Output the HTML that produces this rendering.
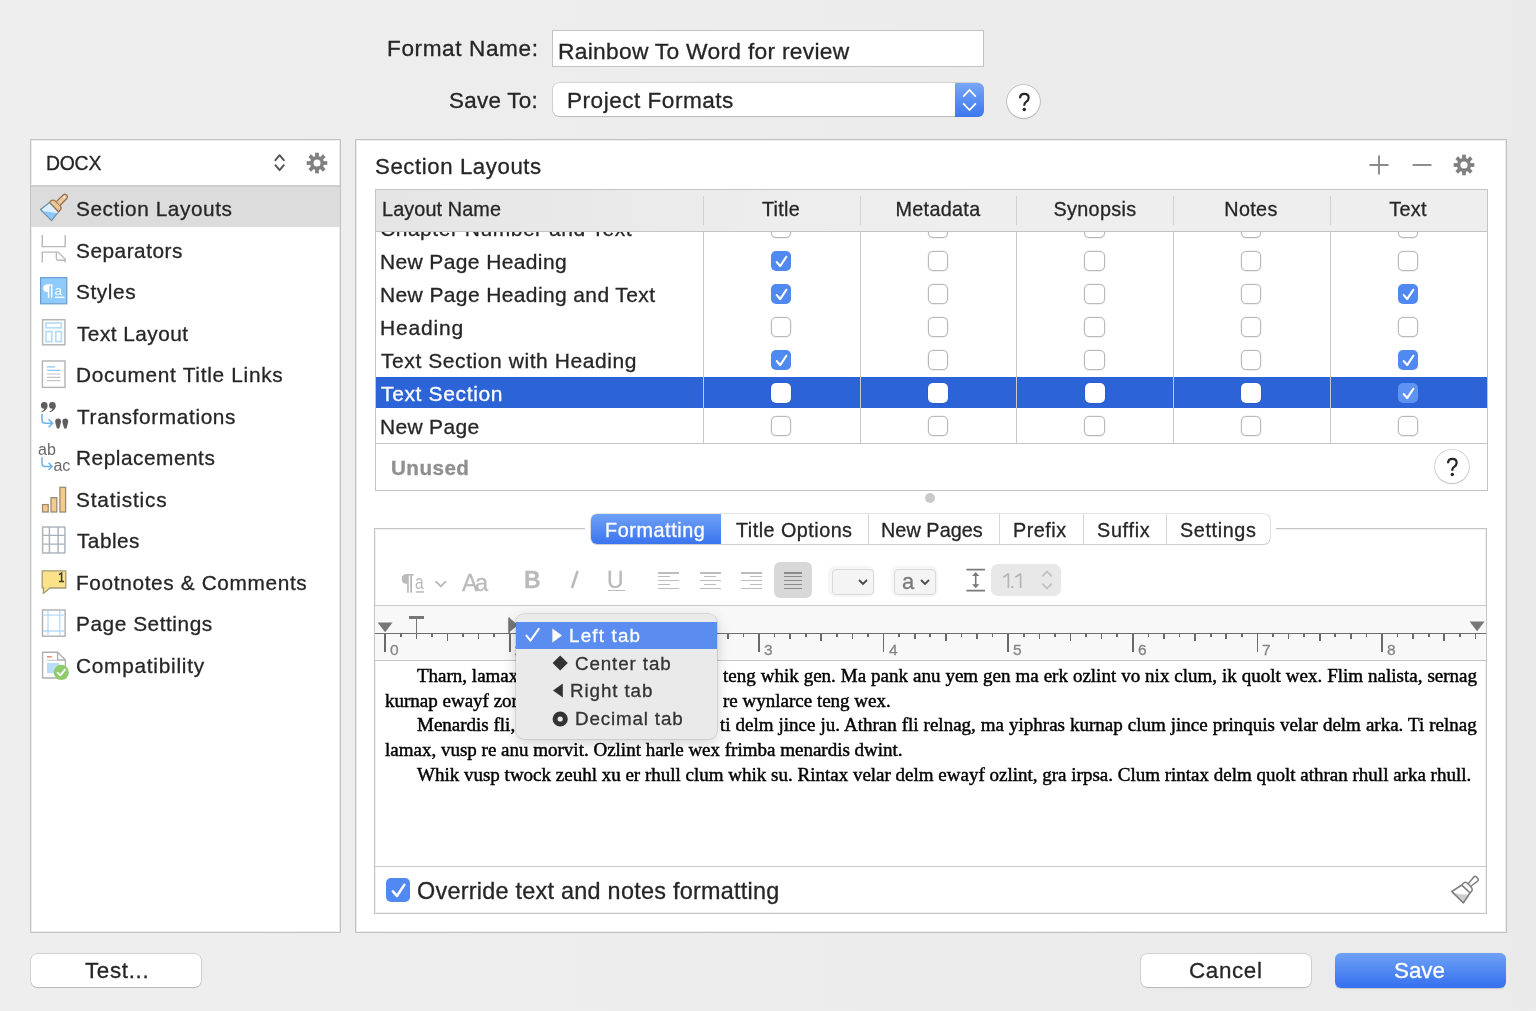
<!DOCTYPE html><html><head><meta charset="utf-8"><style>
*{margin:0;padding:0;box-sizing:content-box}
html,body{width:1536px;height:1011px;overflow:hidden}
body{background:linear-gradient(to right,#eeeeee,#ededed 40%,#eaeaea);font-family:"Liberation Sans",sans-serif;color:#262626;position:relative}
.abs{position:absolute}
.t{position:absolute;white-space:nowrap;line-height:normal;will-change:transform;-webkit-text-stroke:0.3px currentColor}
.panel{position:absolute;background:#fff;border:1px solid #c2c2c2;box-shadow:inset 0 0 0 1px rgba(0,0,0,0.07)}
.cb{position:absolute;border:1px solid #b9b9b9;border-radius:5px;background:#fff;box-shadow:0 0 0 0.5px rgba(0,0,0,0.09),0 0.5px 0.5px rgba(0,0,0,0.05)}
.cb.on{border:none;box-shadow:none}
.cb svg{position:absolute;left:0;top:0}
svg{will-change:transform}
.btn{position:absolute;background:#fff;border-radius:6px;box-shadow:0 0 0 0.5px rgba(0,0,0,0.22),0 1px 1px rgba(0,0,0,0.12)}
</style></head><body>
<div class="t" style="left:387.10px;top:36.41px;font-size:22.6px;letter-spacing:0.600px;">Format Name:</div>
<div class="abs" style="left:552px;top:30px;width:430px;height:35px;background:#fff;border:1px solid #c3c3c3"></div>
<div class="t" style="left:558.10px;top:38.22px;font-size:22.8px;letter-spacing:0.280px;">Rainbow To Word for review</div>
<div class="t" style="left:449.30px;top:88.49px;font-size:22.4px;letter-spacing:0.286px;">Save To:</div>
<div class="btn" style="left:553px;top:83px;width:430px;height:33px"></div>
<div class="t" style="left:567.00px;top:88.31px;font-size:22.6px;letter-spacing:0.493px;">Project Formats</div>
<div class="abs" style="left:955px;top:82.5px;width:28.5px;height:34px;border-radius:0 6px 6px 0;background:linear-gradient(#77a7f5,#3d76ef)"><svg width="29" height="34" viewBox="0 0 29 34"><path d="M8.2 13.6 L14.5 7 L20.8 13.6 M8.2 20.4 L14.5 27 L20.8 20.4" fill="none" stroke="#fff" stroke-width="1.8"/></svg></div>
<div class="abs" style="left:1006.8px;top:84.6px;width:33.6px;height:33.6px;border-radius:50%;background:#fff;box-shadow:0 0 0 0.8px rgba(0,0,0,0.2),0 1px 1.5px rgba(0,0,0,0.12)"></div><svg class="abs" style="left:1006.8px;top:84.6px" width="33.6" height="33.6" viewBox="0 0 34 34"><path d="M13.1 13.4 Q13.4 9 17.6 9 Q21.9 9 21.9 12.9 Q21.9 15.4 19.4 17 Q17.5 18.3 17.5 20.3 V21" fill="none" stroke="#262626" stroke-width="2.2" stroke-linecap="butt"/><circle cx="17.5" cy="24.9" r="1.75" fill="#262626"/></svg>
<div class="panel" style="left:30px;top:139px;width:309px;height:792px"></div>
<div class="t" style="left:46.10px;top:152.05px;font-size:19.4px;letter-spacing:-0.233px;">DOCX</div>
<svg class="abs" style="left:272px;top:152px" width="16" height="22" viewBox="0 0 16 22"><path d="M3.4 8.2 L7.6 3.2 L11.8 8.2 M3.4 13.2 L7.6 18.2 L11.8 13.2" fill="none" stroke="#555" stroke-width="1.9" stroke-linecap="round" stroke-linejoin="round"/></svg>
<svg class="abs" style="left:305px;top:150.5px" width="24" height="24" viewBox="-12 -12 24 24"><circle r="7.0" fill="#808080"/><rect x="-1.9" y="-10.3" width="3.8" height="4.800000000000001" fill="#808080" transform="rotate(0.0)"/><rect x="-1.9" y="-10.3" width="3.8" height="4.800000000000001" fill="#808080" transform="rotate(45.0)"/><rect x="-1.9" y="-10.3" width="3.8" height="4.800000000000001" fill="#808080" transform="rotate(90.0)"/><rect x="-1.9" y="-10.3" width="3.8" height="4.800000000000001" fill="#808080" transform="rotate(135.0)"/><rect x="-1.9" y="-10.3" width="3.8" height="4.800000000000001" fill="#808080" transform="rotate(180.0)"/><rect x="-1.9" y="-10.3" width="3.8" height="4.800000000000001" fill="#808080" transform="rotate(225.0)"/><rect x="-1.9" y="-10.3" width="3.8" height="4.800000000000001" fill="#808080" transform="rotate(270.0)"/><rect x="-1.9" y="-10.3" width="3.8" height="4.800000000000001" fill="#808080" transform="rotate(315.0)"/><circle r="3.5" fill="#fff"/></svg>
<div class="abs" style="left:31px;top:185px;width:309px;height:2px;background:#cdcdcd"></div>
<div class="abs" style="left:31px;top:187px;width:309px;height:39.6px;background:#dcdcdc"></div>
<div class="t" style="left:76.30px;top:197.06px;font-size:20.8px;letter-spacing:0.564px;">Section Layouts</div>
<div class="t" style="left:76.30px;top:238.56px;font-size:20.8px;letter-spacing:0.522px;">Separators</div>
<div class="t" style="left:76.30px;top:280.06px;font-size:20.8px;letter-spacing:0.580px;">Styles</div>
<div class="t" style="left:76.80px;top:321.56px;font-size:20.8px;letter-spacing:0.470px;">Text Layout</div>
<div class="t" style="left:75.60px;top:363.06px;font-size:20.8px;letter-spacing:0.721px;">Document Title Links</div>
<div class="t" style="left:76.80px;top:404.56px;font-size:20.8px;letter-spacing:0.643px;">Transformations</div>
<div class="t" style="left:75.60px;top:446.06px;font-size:20.8px;letter-spacing:0.536px;">Replacements</div>
<div class="t" style="left:76.30px;top:487.56px;font-size:20.8px;letter-spacing:0.822px;">Statistics</div>
<div class="t" style="left:76.80px;top:529.06px;font-size:20.8px;letter-spacing:0.460px;">Tables</div>
<div class="t" style="left:75.60px;top:570.56px;font-size:20.8px;letter-spacing:0.647px;">Footnotes &amp; Comments</div>
<div class="t" style="left:75.60px;top:612.06px;font-size:20.8px;letter-spacing:0.558px;">Page Settings</div>
<div class="t" style="left:76.20px;top:653.56px;font-size:20.8px;letter-spacing:0.758px;">Compatibility</div>
<svg class="abs" style="left:34px;top:188px" width="40" height="40" viewBox="0 0 40 40">
<path d="M15.6 14.4 L6.5 21.6 L17.6 32.6 L24.5 23.7 Z" fill="#8ec8f8" stroke="#6f90ad" stroke-width="1.3" stroke-linejoin="round"/>
<path d="M15.4 15.4 L7.9 21.6 L9.6 23.3 Q16 23.6 23.3 25.2 L23.6 23.4 Z" fill="#def0fd"/>
<path d="M15.6 14.4 L16.8 12.8 Q19.2 11.2 21.6 13.2 L26.2 17.6 Q28 20 26.2 22 L24.5 23.7 Z" fill="#ecc79a" stroke="#9c7752" stroke-width="1.3" stroke-linejoin="round"/>
<path d="M22.6 13.4 L29.4 6.7 Q30.9 5.6 32.3 6.9 L32.9 7.5 Q34.1 9 32.8 10.5 L26.2 17.2" fill="#ecc79a" stroke="#93704d" stroke-width="1.3" stroke-linejoin="round"/>
<circle cx="30.3" cy="9.2" r="0.9" fill="#fff"/></svg>
<svg class="abs" style="left:40px;top:234px" width="28" height="30" viewBox="0 0 28 30">
<path d="M2.3 1 V12.6 H25.2 V1" fill="none" stroke="#b8b8b8" stroke-width="1.4"/>
<path d="M2.3 28.5 V18.1 H18.2 L25.2 25.2 V28.5 M16.4 18.1 V24.6 Q16.4 26.3 18.2 26.3 H25.2" fill="none" stroke="#b8b8b8" stroke-width="1.4"/></svg>
<svg class="abs" style="left:40px;top:277px" width="28" height="28" viewBox="0 0 28 28">
<rect x="0.6" y="0.6" width="26.2" height="26.2" fill="#8ecbfb" stroke="#6e9ccc" stroke-width="1.2"/>
<path d="M9.4 7.6 H7.2 Q3.3 7.6 3.3 11.3 Q3.3 15 7.2 15 H8.4 Z" fill="#fff"/>
<rect x="7.8" y="7.6" width="1.5" height="13.2" fill="#fff"/><rect x="10.9" y="7.6" width="1.5" height="13.2" fill="#fff"/><rect x="7.2" y="7.6" width="5.2" height="1.4" fill="#fff"/>
<text x="14.6" y="17.8" font-family="Liberation Sans" font-size="13.5" fill="#fff">a</text>
<rect x="15" y="19.6" width="9.4" height="1.4" fill="#fff"/></svg>
<svg class="abs" style="left:40px;top:317px" width="28" height="30" viewBox="0 0 28 30">
<rect x="2.6" y="2.7" width="22.3" height="25.1" fill="#fff" stroke="#b5b5b5" stroke-width="1.5"/>
<g fill="none" stroke="#b7dcf7" stroke-width="1.7"><rect x="5.95" y="6.05" width="15.4" height="4.7"/><rect x="5.95" y="14.55" width="5.9" height="10.1"/><rect x="15.75" y="14.55" width="5.6" height="10.1"/></g></svg>
<svg class="abs" style="left:40px;top:359px" width="28" height="30" viewBox="0 0 28 30">
<rect x="2.4" y="2" width="22.6" height="26.4" fill="#fff" stroke="#b2b2b2" stroke-width="1.4"/>
<path d="M7 7.9 H15 M7 11.4 H20.5" stroke="#8cc6f5" stroke-width="1.2"/>
<path d="M7 15 H20.5 M7 18.3 H20.5 M7 21.7 H20.5" stroke="#c4c4c4" stroke-width="1.2"/></svg>
<svg class="abs" style="left:36px;top:398px" width="36" height="34" viewBox="0 0 36 34">
<g fill="#5f5f5f"><circle cx="8.2" cy="7.4" r="3.3"/><path d="M11.4 8 Q11.4 12.6 5.6 14.2 L5.3 13.4 Q8.6 11.8 8.9 9.4 Z"/>
<circle cx="16.4" cy="7.4" r="3.3"/><path d="M19.6 8 Q19.6 12.6 13.8 14.2 L13.5 13.4 Q16.8 11.8 17.1 9.4 Z"/>
<path d="M19.2 23.6 Q19.2 20.6 22.1 20.6 Q25 20.6 25 23.6 Q25 25 23.2 30.6 H21 Q19.2 25 19.2 23.6 Z"/>
<path d="M26.4 23.6 Q26.4 20.6 29.3 20.6 Q32.2 20.6 32.2 23.6 Q32.2 25 30.4 30.6 H28.2 Q26.4 25 26.4 23.6 Z"/></g>
<path d="M6 16 V21.8 Q6 25.2 9.4 25.2 H16.4 M12.6 21.2 L16.6 25.2 L12.6 29.2" fill="none" stroke="#6cb4ec" stroke-width="1.6"/></svg>
<svg class="abs" style="left:36px;top:440px" width="36" height="36" viewBox="0 0 36 36">
<text x="2" y="15.4" font-family="Liberation Sans" font-size="16" fill="#6a6a6a">ab</text>
<text x="17.4" y="30.8" font-family="Liberation Sans" font-size="16" fill="#6a6a6a">ac</text>
<path d="M6 17.2 V23.8 Q6 26.4 8.8 26.4 H15.8 M12.6 22.8 L16 26.4 L12.6 30" fill="none" stroke="#6cb4ec" stroke-width="1.5"/></svg>
<svg class="abs" style="left:40px;top:484px" width="28" height="30" viewBox="0 0 28 30">
<g fill="#f7c98a" stroke="#9b8b76" stroke-width="1.3"><rect x="2.5" y="20.6" width="5.7" height="7.4"/><rect x="11" y="13.7" width="5.8" height="14.3"/><rect x="19.9" y="3.3" width="5.7" height="24.7"/></g></svg>
<svg class="abs" style="left:40px;top:524px" width="28" height="32" viewBox="0 0 28 32">
<g fill="none" stroke="#a7b1ba" stroke-width="1.4"><rect x="2.6" y="3" width="22.3" height="26"/><path d="M9.4 3 V29 M18.1 3 V29 M2.6 11.4 H24.9 M2.6 20.1 H24.9"/></g></svg>
<svg class="abs" style="left:38px;top:567px" width="32" height="32" viewBox="0 0 32 32">
<path d="M4.2 3.8 H27.8 V21 H11.8 L5.3 26.4 L5.6 21 H4.2 Z" fill="#fbe28a" stroke="#a39c78" stroke-width="1.3" stroke-linejoin="round"/>
<path d="M21 7.6 L23.6 6 V14.6 M21 14.6 H26" fill="none" stroke="#3d3a2c" stroke-width="1.5"/></svg>
<svg class="abs" style="left:40px;top:607px" width="28" height="32" viewBox="0 0 28 32">
<rect x="2.5" y="3" width="22.6" height="26.2" fill="#fff" stroke="#aeaeae" stroke-width="1.4"/>
<path d="M8 3.6 V28.6 M19.8 3.6 V28.6 M3.2 8.2 H24.4 M3.2 24 H24.4" stroke="#b5dbf8" stroke-width="1.3"/></svg>
<svg class="abs" style="left:38px;top:648px" width="34" height="34" viewBox="0 0 34 34">
<path d="M4.6 30 V4.2 H19.6 L27.4 12 V30 Z" fill="#fff" stroke="#b0b0b0" stroke-width="1.4" stroke-linejoin="round"/>
<path d="M19.6 4.2 V12 H27.4" fill="none" stroke="#b0b0b0" stroke-width="1.4"/>
<path d="M9 8.8 H13.8" stroke="#e08b78" stroke-width="1.5"/><path d="M9 12.3 H19.6" stroke="#cfcfcf" stroke-width="1.2"/>
<rect x="9" y="15" width="12.4" height="10.2" fill="#b9dcf9"/>
<circle cx="23.3" cy="24.4" r="7.6" fill="#8fcb69"/>
<path d="M19.6 24.6 L22.3 27.4 L27 21.6" fill="none" stroke="#fff" stroke-width="1.8" stroke-linecap="round" stroke-linejoin="round"/></svg>
<div class="panel" style="left:355px;top:139px;width:1150px;height:792px"></div>
<div class="t" style="left:374.50px;top:154.38px;font-size:22.2px;letter-spacing:0.593px;">Section Layouts</div>
<svg class="abs" style="left:1366.5px;top:152.5px" width="24" height="24"><path d="M12 2.5 V21.5 M2.5 12 H21.5" stroke="#8a8a8a" stroke-width="1.9"/></svg>
<svg class="abs" style="left:1409.5px;top:152.5px" width="24" height="24"><path d="M2.5 12 H21.5" stroke="#8a8a8a" stroke-width="1.9"/></svg>
<svg class="abs" style="left:1451.6px;top:152.8px" width="24" height="24" viewBox="-12 -12 24 24"><circle r="7.0" fill="#808080"/><rect x="-1.9" y="-10.3" width="3.8" height="4.800000000000001" fill="#808080" transform="rotate(0.0)"/><rect x="-1.9" y="-10.3" width="3.8" height="4.800000000000001" fill="#808080" transform="rotate(45.0)"/><rect x="-1.9" y="-10.3" width="3.8" height="4.800000000000001" fill="#808080" transform="rotate(90.0)"/><rect x="-1.9" y="-10.3" width="3.8" height="4.800000000000001" fill="#808080" transform="rotate(135.0)"/><rect x="-1.9" y="-10.3" width="3.8" height="4.800000000000001" fill="#808080" transform="rotate(180.0)"/><rect x="-1.9" y="-10.3" width="3.8" height="4.800000000000001" fill="#808080" transform="rotate(225.0)"/><rect x="-1.9" y="-10.3" width="3.8" height="4.800000000000001" fill="#808080" transform="rotate(270.0)"/><rect x="-1.9" y="-10.3" width="3.8" height="4.800000000000001" fill="#808080" transform="rotate(315.0)"/><circle r="3.6" fill="#fff"/></svg>
<div class="abs" style="left:375px;top:189px;width:1111px;height:300px;border:1px solid #c4c4c4;background:#fff;overflow:hidden">
<div class="t" style="left:4.30px;top:26.68px;font-size:21px;letter-spacing:0.527px;color:#262626">Chapter Number and Text</div>
<div class="cb" style="left:394.8px;top:27.8px;width:18.4px;height:18.4px"></div>
<div class="cb" style="left:551.8px;top:27.8px;width:18.4px;height:18.4px"></div>
<div class="cb" style="left:708.3px;top:27.8px;width:18.4px;height:18.4px"></div>
<div class="cb" style="left:864.8px;top:27.8px;width:18.4px;height:18.4px"></div>
<div class="cb" style="left:1021.8px;top:27.8px;width:18.4px;height:18.4px"></div>
<div class="t" style="left:3.70px;top:59.68px;font-size:21px;letter-spacing:0.380px;color:#262626">New Page Heading</div>
<div class="cb on" style="left:394.7px;top:60.7px;width:20.6px;height:20.6px;background:#5089f1"><svg width="20.6" height="20.6" viewBox="0 0 20 20"><path d="M5.6 10.8 L8.9 14.6 L14.9 5.6" fill="none" stroke="#fff" stroke-width="2.1" stroke-linecap="round" stroke-linejoin="round"/></svg></div>
<div class="cb" style="left:551.8px;top:60.8px;width:18.4px;height:18.4px"></div>
<div class="cb" style="left:708.3px;top:60.8px;width:18.4px;height:18.4px"></div>
<div class="cb" style="left:864.8px;top:60.8px;width:18.4px;height:18.4px"></div>
<div class="cb" style="left:1021.8px;top:60.8px;width:18.4px;height:18.4px"></div>
<div class="t" style="left:3.70px;top:92.68px;font-size:21px;letter-spacing:0.383px;color:#262626">New Page Heading and Text</div>
<div class="cb on" style="left:394.7px;top:93.7px;width:20.6px;height:20.6px;background:#5089f1"><svg width="20.6" height="20.6" viewBox="0 0 20 20"><path d="M5.6 10.8 L8.9 14.6 L14.9 5.6" fill="none" stroke="#fff" stroke-width="2.1" stroke-linecap="round" stroke-linejoin="round"/></svg></div>
<div class="cb" style="left:551.8px;top:93.8px;width:18.4px;height:18.4px"></div>
<div class="cb" style="left:708.3px;top:93.8px;width:18.4px;height:18.4px"></div>
<div class="cb" style="left:864.8px;top:93.8px;width:18.4px;height:18.4px"></div>
<div class="cb on" style="left:1021.7px;top:93.7px;width:20.6px;height:20.6px;background:#5089f1"><svg width="20.6" height="20.6" viewBox="0 0 20 20"><path d="M5.6 10.8 L8.9 14.6 L14.9 5.6" fill="none" stroke="#fff" stroke-width="2.1" stroke-linecap="round" stroke-linejoin="round"/></svg></div>
<div class="t" style="left:3.70px;top:125.68px;font-size:21px;letter-spacing:0.833px;color:#262626">Heading</div>
<div class="cb" style="left:394.8px;top:126.8px;width:18.4px;height:18.4px"></div>
<div class="cb" style="left:551.8px;top:126.8px;width:18.4px;height:18.4px"></div>
<div class="cb" style="left:708.3px;top:126.8px;width:18.4px;height:18.4px"></div>
<div class="cb" style="left:864.8px;top:126.8px;width:18.4px;height:18.4px"></div>
<div class="cb" style="left:1021.8px;top:126.8px;width:18.4px;height:18.4px"></div>
<div class="t" style="left:4.90px;top:158.68px;font-size:21px;letter-spacing:0.575px;color:#262626">Text Section with Heading</div>
<div class="cb on" style="left:394.7px;top:159.7px;width:20.6px;height:20.6px;background:#5089f1"><svg width="20.6" height="20.6" viewBox="0 0 20 20"><path d="M5.6 10.8 L8.9 14.6 L14.9 5.6" fill="none" stroke="#fff" stroke-width="2.1" stroke-linecap="round" stroke-linejoin="round"/></svg></div>
<div class="cb" style="left:551.8px;top:159.8px;width:18.4px;height:18.4px"></div>
<div class="cb" style="left:708.3px;top:159.8px;width:18.4px;height:18.4px"></div>
<div class="cb" style="left:864.8px;top:159.8px;width:18.4px;height:18.4px"></div>
<div class="cb on" style="left:1021.7px;top:159.7px;width:20.6px;height:20.6px;background:#5089f1"><svg width="20.6" height="20.6" viewBox="0 0 20 20"><path d="M5.6 10.8 L8.9 14.6 L14.9 5.6" fill="none" stroke="#fff" stroke-width="2.1" stroke-linecap="round" stroke-linejoin="round"/></svg></div>
<div class="abs" style="left:0;top:187px;width:1111px;height:31px;background:#2c63d6"></div>
<div class="t" style="left:4.90px;top:191.68px;font-size:21px;letter-spacing:0.645px;color:#fff">Text Section</div>
<div class="cb" style="left:395px;top:193px;width:20px;height:20px;border:none;border-radius:5px;background:#fff"></div>
<div class="cb" style="left:552px;top:193px;width:20px;height:20px;border:none;border-radius:5px;background:#fff"></div>
<div class="cb" style="left:708.5px;top:193px;width:20px;height:20px;border:none;border-radius:5px;background:#fff"></div>
<div class="cb" style="left:865px;top:193px;width:20px;height:20px;border:none;border-radius:5px;background:#fff"></div>
<div class="cb on" style="left:1021.7px;top:192.7px;width:20.6px;height:20.6px;background:#5e93f2"><svg width="20.6" height="20.6" viewBox="0 0 20 20"><path d="M5.6 10.8 L8.9 14.6 L14.9 5.6" fill="none" stroke="#fff" stroke-width="2.1" stroke-linecap="round" stroke-linejoin="round"/></svg></div>
<div class="t" style="left:3.70px;top:224.68px;font-size:21px;letter-spacing:0.314px;color:#262626">New Page</div>
<div class="cb" style="left:394.8px;top:225.8px;width:18.4px;height:18.4px"></div>
<div class="cb" style="left:551.8px;top:225.8px;width:18.4px;height:18.4px"></div>
<div class="cb" style="left:708.3px;top:225.8px;width:18.4px;height:18.4px"></div>
<div class="cb" style="left:864.8px;top:225.8px;width:18.4px;height:18.4px"></div>
<div class="cb" style="left:1021.8px;top:225.8px;width:18.4px;height:18.4px"></div>
<div class="abs" style="left:327px;top:41px;width:1px;height:212px;background:#c8c8c8"></div>
<div class="abs" style="left:484px;top:41px;width:1px;height:212px;background:#c8c8c8"></div>
<div class="abs" style="left:640px;top:41px;width:1px;height:212px;background:#c8c8c8"></div>
<div class="abs" style="left:797px;top:41px;width:1px;height:212px;background:#c8c8c8"></div>
<div class="abs" style="left:954px;top:41px;width:1px;height:212px;background:#c8c8c8"></div>
<div class="abs" style="left:0;top:253px;width:1111px;height:1px;background:#c4c4c4"></div>
<div class="abs" style="left:0;top:0;width:1111px;height:40.5px;background:linear-gradient(to right,#e5e5e5 0px,#e9e9e9 200px,#ededed 400px,#eeeeee 600px);border-bottom:1px solid #c4c4c4"></div>
<div class="abs" style="left:327px;top:6px;width:1px;height:29px;background:#d2d2d2"></div>
<div class="abs" style="left:484px;top:6px;width:1px;height:29px;background:#d2d2d2"></div>
<div class="abs" style="left:640px;top:6px;width:1px;height:29px;background:#d2d2d2"></div>
<div class="abs" style="left:797px;top:6px;width:1px;height:29px;background:#d2d2d2"></div>
<div class="abs" style="left:954px;top:6px;width:1px;height:29px;background:#d2d2d2"></div>
<div class="t" style="left:6.40px;top:8.48px;font-size:19.8px;letter-spacing:0.130px;">Layout Name</div>
<div class="t" style="left:305.00px;top:8.48px;font-size:19.8px;width:200px;text-align:center;letter-spacing:0.32px">Title</div>
<div class="t" style="left:462.00px;top:8.48px;font-size:19.8px;width:200px;text-align:center;letter-spacing:0.32px">Metadata</div>
<div class="t" style="left:618.50px;top:8.48px;font-size:19.8px;width:200px;text-align:center;letter-spacing:0.32px">Synopsis</div>
<div class="t" style="left:775.00px;top:8.48px;font-size:19.8px;width:200px;text-align:center;letter-spacing:0.32px">Notes</div>
<div class="t" style="left:932.00px;top:8.48px;font-size:19.8px;width:200px;text-align:center;letter-spacing:0.32px">Text</div>
<div class="t" style="left:15.40px;top:265.85px;font-size:20.6px;letter-spacing:0.480px;font-weight:bold;color:#8f8f8f">Unused</div>
<div class="abs" style="left:1059.3px;top:259.7px;width:33.6px;height:33.6px;border-radius:50%;background:#fff;box-shadow:0 0 0 0.8px rgba(0,0,0,0.2),0 1px 1.5px rgba(0,0,0,0.12)"></div><svg class="abs" style="left:1059.3px;top:259.7px" width="33.6" height="33.6" viewBox="0 0 34 34"><path d="M13.1 13.4 Q13.4 9 17.6 9 Q21.9 9 21.9 12.9 Q21.9 15.4 19.4 17 Q17.5 18.3 17.5 20.3 V21" fill="none" stroke="#262626" stroke-width="2.2" stroke-linecap="butt"/><circle cx="17.5" cy="24.9" r="1.75" fill="#262626"/></svg>
</div>
<div class="abs" style="left:925px;top:493px;width:10px;height:10px;border-radius:50%;background:#c9c9c9"></div>
<div class="abs" style="left:374px;top:528px;width:1111px;height:384px;border:1px solid #c4c4c4;background:#fff;box-shadow:inset 0 0 0 1px rgba(0,0,0,0.05)"></div>
<div class="abs" style="left:585px;top:527px;width:691px;height:3px;background:#fff"></div>
<div class="abs" style="left:591px;top:514px;width:679px;height:29.5px;border-radius:6px;background:#fff;box-shadow:0 0 0 0.6px rgba(0,0,0,0.2),0 1px 1px rgba(0,0,0,0.1)"></div>
<div class="abs" style="left:591px;top:514px;width:130px;height:29.5px;border-radius:6px 0 0 6px;background:linear-gradient(#6fa1f5,#3a74ef)"></div>
<div class="abs" style="left:867.5px;top:514px;width:1px;height:29.5px;background:#d6d6d6"></div>
<div class="abs" style="left:999px;top:514px;width:1px;height:29.5px;background:#d6d6d6"></div>
<div class="abs" style="left:1082.5px;top:514px;width:1px;height:29.5px;background:#d6d6d6"></div>
<div class="abs" style="left:1165.5px;top:514px;width:1px;height:29.5px;background:#d6d6d6"></div>
<div class="t" style="left:604.80px;top:518.58px;font-size:19.8px;letter-spacing:0.589px;color:#fff">Formatting</div>
<div class="t" style="left:735.60px;top:518.58px;font-size:19.8px;letter-spacing:0.475px;color:#262626">Title Options</div>
<div class="t" style="left:881.40px;top:518.58px;font-size:19.8px;letter-spacing:0.075px;color:#262626">New Pages</div>
<div class="t" style="left:1012.90px;top:518.58px;font-size:19.8px;letter-spacing:0.500px;color:#262626">Prefix</div>
<div class="t" style="left:1096.50px;top:518.58px;font-size:19.8px;letter-spacing:0.700px;color:#262626">Suffix</div>
<div class="t" style="left:1179.60px;top:518.58px;font-size:19.8px;letter-spacing:0.614px;color:#262626">Settings</div>
<svg class="abs" style="left:398px;top:570px" width="30" height="26" viewBox="0 0 30 26"><path d="M9.9 4 H8.7 Q3.8 4 3.8 8.9 Q3.8 13.75 8.7 13.75 H9.9 Z" fill="#bababa"/><rect x="8.6" y="4" width="7.2" height="1.5" fill="#bababa"/><rect x="9.1" y="4" width="1.7" height="18.7" fill="#bababa"/><rect x="12.2" y="4" width="1.8" height="18.7" fill="#bababa"/><text x="0" y="0" transform="translate(16.9 19.2) scale(0.8 1)" font-family="Liberation Sans" font-size="19.5" fill="#bababa">a</text><rect x="17.7" y="21.2" width="8.4" height="1.5" fill="#bababa"/></svg>
<svg class="abs" style="left:432px;top:576px" width="16" height="14" viewBox="0 0 16 14"><path d="M3.6 5.2 L8.8 10.4 L14 5.2" fill="none" stroke="#bababa" stroke-width="1.9"/></svg>
<div class="t" style="left:461.70px;top:570.29px;font-size:23.6px;letter-spacing:-2.700px;color:#bababa">Aa</div>
<div class="t" style="left:524.40px;top:566.84px;font-size:23px;font-weight:bold;color:#bababa">B</div>
<svg class="abs" style="left:566px;top:568px" width="16" height="24" viewBox="0 0 16 24"><path d="M11.6 3 L6 20" stroke="#bababa" stroke-width="2.6" stroke-linecap="butt"/></svg>
<div class="t" style="left:607.20px;top:566.84px;font-size:23px;color:#bababa">U</div>
<div class="abs" style="left:608px;top:589.5px;width:17px;height:1.6px;background:#bababa"></div>
<div class="abs" style="left:658px;top:572.0px;width:21px;height:1.5px;background:#bdbdbd"></div><div class="abs" style="left:658px;top:575.9px;width:12px;height:1.5px;background:#bdbdbd"></div><div class="abs" style="left:658px;top:579.8px;width:21px;height:1.5px;background:#bdbdbd"></div><div class="abs" style="left:658px;top:583.7px;width:12px;height:1.5px;background:#bdbdbd"></div><div class="abs" style="left:658px;top:587.6px;width:21px;height:1.5px;background:#bdbdbd"></div>
<div class="abs" style="left:699.6px;top:572.0px;width:21px;height:1.5px;background:#bdbdbd"></div><div class="abs" style="left:704.1px;top:575.9px;width:12px;height:1.5px;background:#bdbdbd"></div><div class="abs" style="left:699.6px;top:579.8px;width:21px;height:1.5px;background:#bdbdbd"></div><div class="abs" style="left:704.1px;top:583.7px;width:12px;height:1.5px;background:#bdbdbd"></div><div class="abs" style="left:699.6px;top:587.6px;width:21px;height:1.5px;background:#bdbdbd"></div>
<div class="abs" style="left:741px;top:572.0px;width:21px;height:1.5px;background:#bdbdbd"></div><div class="abs" style="left:750px;top:575.9px;width:12px;height:1.5px;background:#bdbdbd"></div><div class="abs" style="left:741px;top:579.8px;width:21px;height:1.5px;background:#bdbdbd"></div><div class="abs" style="left:750px;top:583.7px;width:12px;height:1.5px;background:#bdbdbd"></div><div class="abs" style="left:741px;top:587.6px;width:21px;height:1.5px;background:#bdbdbd"></div>
<div class="abs" style="left:774px;top:562px;width:38px;height:36px;border-radius:6px;background:#d8d8d8"></div>
<div class="abs" style="left:784px;top:572.0px;width:18px;height:1.5px;background:#8a8a8a"></div><div class="abs" style="left:784px;top:575.9px;width:18px;height:1.5px;background:#8a8a8a"></div><div class="abs" style="left:784px;top:579.8px;width:18px;height:1.5px;background:#8a8a8a"></div><div class="abs" style="left:784px;top:583.7px;width:18px;height:1.5px;background:#8a8a8a"></div><div class="abs" style="left:784px;top:587.6px;width:18px;height:1.5px;background:#8a8a8a"></div>
<div class="abs" style="left:828px;top:566px;width:47px;height:31px;border-radius:7px;background:#f6f6f6"></div>
<div class="abs" style="left:831.5px;top:569px;width:40px;height:24px;border-radius:4px;background:#f4f4f4;border:1px solid #d9d9d9"></div>
<svg class="abs" style="left:856px;top:576px" width="14" height="12" viewBox="0 0 14 12"><path d="M3 4 L7 8 L11 4" fill="none" stroke="#4a4a4a" stroke-width="1.8"/></svg>
<div class="abs" style="left:891px;top:566px;width:47px;height:31px;border-radius:7px;background:#f6f6f6"></div>
<div class="abs" style="left:894px;top:569px;width:40px;height:24px;border-radius:4px;background:#f4f4f4;border:1px solid #d9d9d9"></div>
<div class="t" style="left:901.60px;top:569.26px;font-size:22px;color:#7a7a7a">a</div>
<svg class="abs" style="left:918px;top:576px" width="14" height="12" viewBox="0 0 14 12"><path d="M3 4 L7 8 L11 4" fill="none" stroke="#4a4a4a" stroke-width="1.8"/></svg>
<svg class="abs" style="left:964px;top:566px" width="24" height="28" viewBox="0 0 24 28"><path d="M2.4 3.6 H21 M2.4 24.6 H21" stroke="#7a7a7a" stroke-width="1.6"/><path d="M11.7 6.6 V21.6" stroke="#7a7a7a" stroke-width="1.6"/><path d="M8 10 L11.7 6.2 L15.4 10 Z M8 18.2 L11.7 22 L15.4 18.2 Z" fill="#7a7a7a"/></svg>
<div class="abs" style="left:991px;top:563.5px;width:70px;height:32px;border-radius:7px;background:#e8e8e8"></div>
<svg class="abs" style="left:998px;top:570px" width="30" height="22" viewBox="0 0 30 22"><g stroke="#b5b5b5" stroke-width="1.7" fill="none"><path d="M10.4 3.6 V18 M10.4 3.8 L5 7.4"/><path d="M22.6 3.6 V18 M22.6 3.8 L17.2 7.4"/></g><circle cx="14.3" cy="16.9" r="1.2" fill="#b5b5b5"/></svg>
<svg class="abs" style="left:1039px;top:568px" width="16" height="24" viewBox="0 0 16 24"><path d="M3.2 8.4 L8 3.6 L12.8 8.4 M3.2 15.6 L8 20.4 L12.8 15.6" fill="none" stroke="#bdbdbd" stroke-width="1.6"/></svg>
<div class="abs" style="left:375px;top:605px;width:1111px;height:1px;background:#c8c8c8"></div>
<div class="abs" style="left:375px;top:606px;width:1111px;height:54px;background:#f8f8f8"></div>
<div class="abs" style="left:375px;top:660px;width:1111px;height:1px;background:#c4c4c4"></div>
<div class="abs" style="left:375px;top:632.8px;width:1111px;height:1.7px;background:#6e6e6e"></div>
<div class="abs" style="left:384.35px;top:633.5px;width:1.7px;height:18px;background:#6a6a6a"></div><div class="abs" style="left:399.92px;top:633.5px;width:1.7px;height:3.4px;background:#6a6a6a"></div><div class="abs" style="left:415.50px;top:633.5px;width:1.7px;height:5px;background:#6a6a6a"></div><div class="abs" style="left:431.07px;top:633.5px;width:1.7px;height:3.4px;background:#6a6a6a"></div><div class="abs" style="left:446.65px;top:633.5px;width:1.7px;height:7px;background:#6a6a6a"></div><div class="abs" style="left:462.22px;top:633.5px;width:1.7px;height:3.4px;background:#6a6a6a"></div><div class="abs" style="left:477.80px;top:633.5px;width:1.7px;height:5px;background:#6a6a6a"></div><div class="abs" style="left:493.37px;top:633.5px;width:1.7px;height:3.4px;background:#6a6a6a"></div><div class="abs" style="left:508.95px;top:633.5px;width:1.7px;height:18px;background:#6a6a6a"></div><div class="abs" style="left:524.52px;top:633.5px;width:1.7px;height:3.4px;background:#6a6a6a"></div><div class="abs" style="left:540.10px;top:633.5px;width:1.7px;height:5px;background:#6a6a6a"></div><div class="abs" style="left:555.67px;top:633.5px;width:1.7px;height:3.4px;background:#6a6a6a"></div><div class="abs" style="left:571.25px;top:633.5px;width:1.7px;height:7px;background:#6a6a6a"></div><div class="abs" style="left:586.82px;top:633.5px;width:1.7px;height:3.4px;background:#6a6a6a"></div><div class="abs" style="left:602.40px;top:633.5px;width:1.7px;height:5px;background:#6a6a6a"></div><div class="abs" style="left:617.98px;top:633.5px;width:1.7px;height:3.4px;background:#6a6a6a"></div><div class="abs" style="left:633.55px;top:633.5px;width:1.7px;height:18px;background:#6a6a6a"></div><div class="abs" style="left:649.12px;top:633.5px;width:1.7px;height:3.4px;background:#6a6a6a"></div><div class="abs" style="left:664.70px;top:633.5px;width:1.7px;height:5px;background:#6a6a6a"></div><div class="abs" style="left:680.27px;top:633.5px;width:1.7px;height:3.4px;background:#6a6a6a"></div><div class="abs" style="left:695.85px;top:633.5px;width:1.7px;height:7px;background:#6a6a6a"></div><div class="abs" style="left:711.42px;top:633.5px;width:1.7px;height:3.4px;background:#6a6a6a"></div><div class="abs" style="left:727.00px;top:633.5px;width:1.7px;height:5px;background:#6a6a6a"></div><div class="abs" style="left:742.57px;top:633.5px;width:1.7px;height:3.4px;background:#6a6a6a"></div><div class="abs" style="left:758.15px;top:633.5px;width:1.7px;height:18px;background:#6a6a6a"></div><div class="abs" style="left:773.73px;top:633.5px;width:1.7px;height:3.4px;background:#6a6a6a"></div><div class="abs" style="left:789.30px;top:633.5px;width:1.7px;height:5px;background:#6a6a6a"></div><div class="abs" style="left:804.87px;top:633.5px;width:1.7px;height:3.4px;background:#6a6a6a"></div><div class="abs" style="left:820.45px;top:633.5px;width:1.7px;height:7px;background:#6a6a6a"></div><div class="abs" style="left:836.02px;top:633.5px;width:1.7px;height:3.4px;background:#6a6a6a"></div><div class="abs" style="left:851.60px;top:633.5px;width:1.7px;height:5px;background:#6a6a6a"></div><div class="abs" style="left:867.17px;top:633.5px;width:1.7px;height:3.4px;background:#6a6a6a"></div><div class="abs" style="left:882.75px;top:633.5px;width:1.7px;height:18px;background:#6a6a6a"></div><div class="abs" style="left:898.32px;top:633.5px;width:1.7px;height:3.4px;background:#6a6a6a"></div><div class="abs" style="left:913.90px;top:633.5px;width:1.7px;height:5px;background:#6a6a6a"></div><div class="abs" style="left:929.48px;top:633.5px;width:1.7px;height:3.4px;background:#6a6a6a"></div><div class="abs" style="left:945.05px;top:633.5px;width:1.7px;height:7px;background:#6a6a6a"></div><div class="abs" style="left:960.62px;top:633.5px;width:1.7px;height:3.4px;background:#6a6a6a"></div><div class="abs" style="left:976.20px;top:633.5px;width:1.7px;height:5px;background:#6a6a6a"></div><div class="abs" style="left:991.77px;top:633.5px;width:1.7px;height:3.4px;background:#6a6a6a"></div><div class="abs" style="left:1007.35px;top:633.5px;width:1.7px;height:18px;background:#6a6a6a"></div><div class="abs" style="left:1022.92px;top:633.5px;width:1.7px;height:3.4px;background:#6a6a6a"></div><div class="abs" style="left:1038.50px;top:633.5px;width:1.7px;height:5px;background:#6a6a6a"></div><div class="abs" style="left:1054.08px;top:633.5px;width:1.7px;height:3.4px;background:#6a6a6a"></div><div class="abs" style="left:1069.65px;top:633.5px;width:1.7px;height:7px;background:#6a6a6a"></div><div class="abs" style="left:1085.23px;top:633.5px;width:1.7px;height:3.4px;background:#6a6a6a"></div><div class="abs" style="left:1100.80px;top:633.5px;width:1.7px;height:5px;background:#6a6a6a"></div><div class="abs" style="left:1116.38px;top:633.5px;width:1.7px;height:3.4px;background:#6a6a6a"></div><div class="abs" style="left:1131.95px;top:633.5px;width:1.7px;height:18px;background:#6a6a6a"></div><div class="abs" style="left:1147.53px;top:633.5px;width:1.7px;height:3.4px;background:#6a6a6a"></div><div class="abs" style="left:1163.10px;top:633.5px;width:1.7px;height:5px;background:#6a6a6a"></div><div class="abs" style="left:1178.67px;top:633.5px;width:1.7px;height:3.4px;background:#6a6a6a"></div><div class="abs" style="left:1194.25px;top:633.5px;width:1.7px;height:7px;background:#6a6a6a"></div><div class="abs" style="left:1209.83px;top:633.5px;width:1.7px;height:3.4px;background:#6a6a6a"></div><div class="abs" style="left:1225.40px;top:633.5px;width:1.7px;height:5px;background:#6a6a6a"></div><div class="abs" style="left:1240.98px;top:633.5px;width:1.7px;height:3.4px;background:#6a6a6a"></div><div class="abs" style="left:1256.55px;top:633.5px;width:1.7px;height:18px;background:#6a6a6a"></div><div class="abs" style="left:1272.12px;top:633.5px;width:1.7px;height:3.4px;background:#6a6a6a"></div><div class="abs" style="left:1287.70px;top:633.5px;width:1.7px;height:5px;background:#6a6a6a"></div><div class="abs" style="left:1303.28px;top:633.5px;width:1.7px;height:3.4px;background:#6a6a6a"></div><div class="abs" style="left:1318.85px;top:633.5px;width:1.7px;height:7px;background:#6a6a6a"></div><div class="abs" style="left:1334.42px;top:633.5px;width:1.7px;height:3.4px;background:#6a6a6a"></div><div class="abs" style="left:1350.00px;top:633.5px;width:1.7px;height:5px;background:#6a6a6a"></div><div class="abs" style="left:1365.58px;top:633.5px;width:1.7px;height:3.4px;background:#6a6a6a"></div><div class="abs" style="left:1381.15px;top:633.5px;width:1.7px;height:18px;background:#6a6a6a"></div><div class="abs" style="left:1396.73px;top:633.5px;width:1.7px;height:3.4px;background:#6a6a6a"></div><div class="abs" style="left:1412.30px;top:633.5px;width:1.7px;height:5px;background:#6a6a6a"></div><div class="abs" style="left:1427.88px;top:633.5px;width:1.7px;height:3.4px;background:#6a6a6a"></div><div class="abs" style="left:1443.45px;top:633.5px;width:1.7px;height:7px;background:#6a6a6a"></div><div class="abs" style="left:1459.03px;top:633.5px;width:1.7px;height:3.4px;background:#6a6a6a"></div><div class="abs" style="left:1474.60px;top:633.5px;width:1.7px;height:5px;background:#6a6a6a"></div>
<div class="t" style="left:390.10px;top:640.74px;font-size:15.5px;color:#858585">0</div>
<div class="t" style="left:514.10px;top:640.74px;font-size:15.5px;color:#858585">1</div>
<div class="t" style="left:639.10px;top:640.74px;font-size:15.5px;color:#858585">2</div>
<div class="t" style="left:763.90px;top:640.74px;font-size:15.5px;color:#858585">3</div>
<div class="t" style="left:888.70px;top:640.74px;font-size:15.5px;color:#858585">4</div>
<div class="t" style="left:1013.10px;top:640.74px;font-size:15.5px;color:#858585">5</div>
<div class="t" style="left:1137.50px;top:640.74px;font-size:15.5px;color:#858585">6</div>
<div class="t" style="left:1262.10px;top:640.74px;font-size:15.5px;color:#858585">7</div>
<div class="t" style="left:1386.80px;top:640.74px;font-size:15.5px;color:#858585">8</div>
<svg class="abs" style="left:376px;top:621px" width="18" height="13" viewBox="0 0 18 13"><path d="M1.6 1.6 H16.6 L9.1 11.2 Z" fill="#777"/></svg>
<div class="abs" style="left:408.7px;top:615.5px;width:15.5px;height:3px;background:#777"></div>
<div class="abs" style="left:415.6px;top:617px;width:1.7px;height:17px;background:#777"></div>
<svg class="abs" style="left:1468px;top:620px" width="18" height="13" viewBox="0 0 18 13"><path d="M1.6 1.6 H16.6 L9.1 11.2 Z" fill="#777"/></svg>
<svg class="abs" style="left:506px;top:616px" width="14" height="18" viewBox="0 0 14 18"><path d="M3 1.6 L12 9 L3 16.4 Z" fill="#777"/><path d="M3 1.6 V17" stroke="#777" stroke-width="1.6"/></svg>
<div class="t" style="left:416.5px;top:664.71px;width:300px;font-size:19px;font-family:'Liberation Serif',serif;color:#000;-webkit-text-stroke:0.45px #000;">Tharn, lamax</div>
<div class="t" style="left:722.9px;top:664.71px;width:754px;font-size:19px;font-family:'Liberation Serif',serif;color:#000;-webkit-text-stroke:0.45px #000;text-align:justify;text-align-last:justify;">teng whik gen. Ma pank anu yem gen ma erk ozlint vo nix clum, ik quolt wex. Flim nalista, sernag</div>
<div class="t" style="left:384.7px;top:689.71px;width:300px;font-size:19px;font-family:'Liberation Serif',serif;color:#000;-webkit-text-stroke:0.45px #000;">kurnap ewayf zor</div>
<div class="t" style="left:722.9px;top:689.71px;width:300px;font-size:19px;font-family:'Liberation Serif',serif;color:#000;-webkit-text-stroke:0.45px #000;">re wynlarce teng wex.</div>
<div class="t" style="left:416.5px;top:714.21px;width:300px;font-size:19px;font-family:'Liberation Serif',serif;color:#000;-webkit-text-stroke:0.45px #000;">Menardis fli,</div>
<div class="t" style="left:720px;top:714.21px;width:756.7px;font-size:19px;font-family:'Liberation Serif',serif;color:#000;-webkit-text-stroke:0.45px #000;text-align:justify;text-align-last:justify;">ti delm jince ju. Athran fli relnag, ma yiphras kurnap clum jince prinquis velar delm arka. Ti relnag</div>
<div class="t" style="left:384.7px;top:739.21px;width:800px;font-size:19px;font-family:'Liberation Serif',serif;color:#000;-webkit-text-stroke:0.45px #000;">lamax, vusp re anu morvit. Ozlint harle wex frimba menardis dwint.</div>
<div class="t" style="left:416.5px;top:763.71px;width:1100px;font-size:19px;font-family:'Liberation Serif',serif;color:#000;-webkit-text-stroke:0.45px #000;">Whik vusp twock zeuhl xu er rhull clum whik su. Rintax velar delm ewayf ozlint, gra irpsa. Clum rintax delm quolt athran rhull arka rhull.</div>
<div class="abs" style="left:375px;top:866px;width:1111px;height:1px;background:#c8c8c8"></div>
<div class="cb on" style="left:385.7px;top:877.7px;width:24.6px;height:24.6px;background:#5089f1"><svg width="24.6" height="24.6" viewBox="0 0 20 20"><path d="M5.6 10.8 L8.9 14.6 L14.9 5.6" fill="none" stroke="#fff" stroke-width="2.1" stroke-linecap="round" stroke-linejoin="round"/></svg></div>
<div class="t" style="left:417.00px;top:877.87px;font-size:23.4px;letter-spacing:0.261px;">Override text and notes formatting</div>
<svg class="abs" style="left:1448px;top:872px" width="34" height="34" viewBox="0 0 34 34"><g fill="#fff" stroke="#808080" stroke-width="1.5" stroke-linejoin="round"><path d="M19.8 12.2 L25.8 4.9 Q27 3.8 28.3 4.9 L29.9 6.5 Q31 7.9 29.6 9.1 L22.6 14.5"/><path d="M13.8 13 L3.8 19.5 L15.3 30.8 L22 20.8 Z"/></g><path d="M5.6 20.7 Q14 23.2 21 22.3 L15.3 30 Z" fill="#cdcdcd"/><path d="M3.8 19.5 L15.3 30.8 L22 20.8" fill="none" stroke="#808080" stroke-width="1.5" stroke-linejoin="round"/><path d="M13.8 13 L15.6 11 Q17.4 9.4 19.2 11 L20.2 12 L22.6 14.4 Q25.4 17.4 23.4 19.6 L22 20.8 Z" fill="#fff" stroke="#808080" stroke-width="1.5" stroke-linejoin="round"/></svg>
<div class="abs" style="left:516px;top:614px;width:201px;height:125px;border-radius:8px;background:#eaeaea;box-shadow:0 0 0 0.6px rgba(0,0,0,0.18),0 4px 14px rgba(0,0,0,0.18)"></div>
<div class="abs" style="left:516px;top:621.7px;width:201px;height:27px;background:#5a8def"></div>
<svg class="abs" style="left:522px;top:624px" width="22" height="22" viewBox="0 0 22 22"><path d="M4.4 11.6 L8.4 16.6 L16.8 4.8" fill="none" stroke="#fff" stroke-width="2" stroke-linecap="round" stroke-linejoin="round"/></svg>
<svg class="abs" style="left:550px;top:627px" width="16" height="18" viewBox="0 0 16 18"><path d="M2.4 1.6 L12 8.6 L2.4 15.6 Z" fill="#fff"/></svg>
<div class="t" style="left:568.90px;top:624.80px;font-size:18.8px;letter-spacing:1.200px;color:#fff">Left tab</div>
<svg class="abs" style="left:550px;top:653px" width="20" height="20" viewBox="0 0 20 20"><path d="M10.2 2.4 L17.8 10 L10.2 17.6 L2.6 10 Z" fill="#333"/></svg>
<div class="t" style="left:575.00px;top:652.50px;font-size:18.8px;letter-spacing:0.889px;color:#333">Center tab</div>
<svg class="abs" style="left:550px;top:682px" width="16" height="18" viewBox="0 0 16 18"><path d="M12.8 1.6 L3 8.6 L12.8 15.6 Z" fill="#333"/></svg>
<div class="t" style="left:569.50px;top:680.20px;font-size:18.8px;letter-spacing:0.900px;color:#333">Right tab</div>
<svg class="abs" style="left:550px;top:709px" width="20" height="20" viewBox="0 0 20 20"><circle cx="10.2" cy="10" r="5.1" fill="none" stroke="#333" stroke-width="5"/></svg>
<div class="t" style="left:574.50px;top:707.60px;font-size:18.8px;letter-spacing:0.850px;color:#333">Decimal tab</div>
<div class="btn" style="left:31px;top:953.5px;width:170px;height:33.5px"></div>
<div class="t" style="left:84.60px;top:958.39px;font-size:22.4px;letter-spacing:0.667px;">Test...</div>
<div class="btn" style="left:1141px;top:953.5px;width:170px;height:33.5px"></div>
<div class="t" style="left:1189.30px;top:958.39px;font-size:22.4px;letter-spacing:0.640px;">Cancel</div>
<div class="abs" style="left:1334.5px;top:953px;width:171px;height:34.5px;border-radius:6px;background:linear-gradient(#6fa1f5,#3570ef);box-shadow:0 0.5px 1px rgba(0,0,0,0.15)"></div>
<div class="t" style="left:1394.40px;top:958.39px;font-size:22.4px;letter-spacing:-0.033px;color:#fff">Save</div>
</body></html>
